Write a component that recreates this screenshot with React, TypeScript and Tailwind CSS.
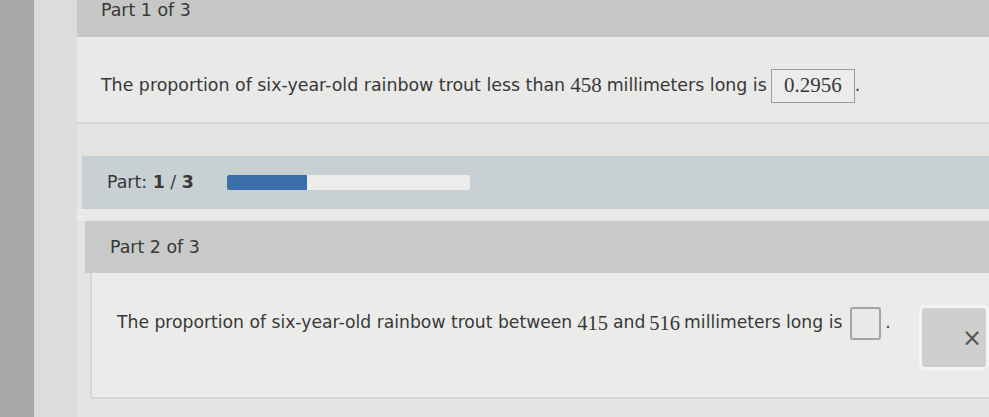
import React from "react";

const sans = { fontFamily: '"DejaVu Sans", Verdana, sans-serif' };
const serif = { fontFamily: '"Liberation Serif", "Times New Roman", serif' };

export default function App() {
  return (
    <div
      className="flex h-[417px] w-[989px] overflow-hidden bg-[#e3e3e1] text-[17.4px] text-[#383838]"
      style={sans}
    >
      <div className="w-[34px] shrink-0 bg-[#a8a8a7]" />
      <div className="w-[43px] shrink-0 bg-[#dcdcda]" />
      <div className="flex flex-1 flex-col">
        {/* Part 1 header */}
        <div className="flex h-[37px] items-start bg-[#c7c7c5] pl-[24px] leading-[20px]">
          <span>Part 1 of 3</span>
        </div>
        {/* Part 1 body */}
        <div className="flex h-[87px] items-center border-b-2 border-[#d4d4d2] bg-[#e9e9e7] pl-[24px] pt-[12px]">
          <span>The proportion of six-year-old rainbow trout less than </span>
          <span className="mx-[5px] text-[21px]" style={serif}>
            458
          </span>
          <span>millimeters long is</span>
          <span
            className="ml-[4px] flex h-[34px] w-[84px] items-center justify-center border border-[#9c9c9a] bg-[#ececea] text-[21px]"
            style={serif}
          >
            0.2956
          </span>
          <span>.</span>
        </div>
        <div className="h-[32px]" />
        {/* Progress row */}
        <div className="ml-[5px] flex h-[53px] items-center bg-[#c9d0d3] pl-[25px]">
          <span>
            Part: <span className="font-bold">1</span> / <span className="font-bold">3</span>
          </span>
          <div className="ml-[33px] flex h-[15px] w-[243px] overflow-hidden rounded-[2px] bg-[#ececea]">
            <div className="h-full w-[80px] bg-[#3a6fac]" />
          </div>
        </div>
        <div className="h-[12px] bg-[#e9e9e7]" />
        {/* Part 2 header */}
        <div className="ml-[8px] flex h-[52px] items-center bg-[#c7cac8] pl-[25px]">
          <span>Part 2 of 3</span>
        </div>
        {/* Part 2 body */}
        <div className="ml-[13px] flex h-[126px] items-start border-b-2 border-l-2 border-[#d6d6d4] bg-[#ebebe9] pl-[25px] pt-[30px] text-[17.2px]">
          <div className="flex h-[40px] items-center">
            <span>The proportion of six-year-old rainbow trout between </span>
            <span className="mx-[5px] text-[20.5px]" style={serif}>
              415
            </span>
            <span>and </span>
            <span className="mx-[4px] text-[20.5px]" style={serif}>
              516
            </span>
            <span>millimeters long is</span>
            <span className="ml-[8px] h-[33px] w-[31px] rounded-[3px] border-2 border-[#a3a5a5] bg-[#e8eaea]" />
            <span className="ml-[4px]">.</span>
          </div>
          <div className="ml-[28px] mt-[2px] flex h-[65px] flex-1 items-center justify-end rounded-[6px] border-[3px] border-[#f4f4f2] bg-[#cfd0ce] pr-[4px]">
            <span className="text-[24px] leading-none text-[#555]">×</span>
          </div>
        </div>
      </div>
    </div>
  );
}
